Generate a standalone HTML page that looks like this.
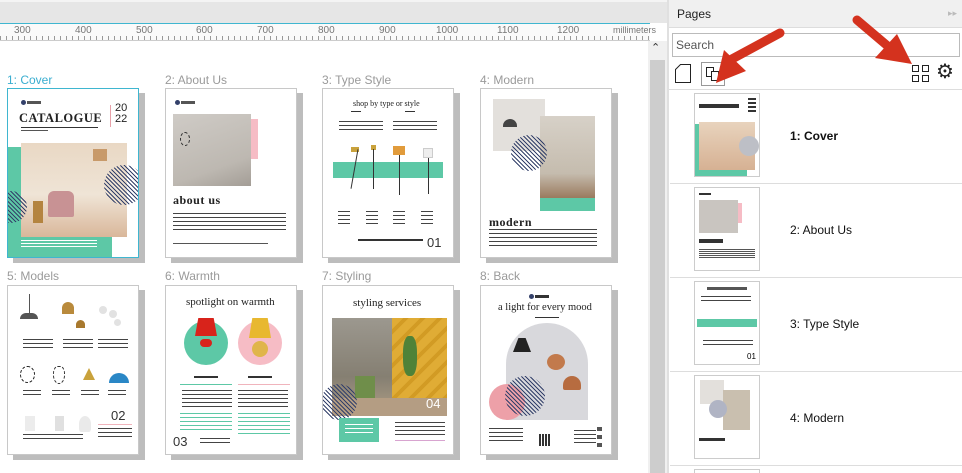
<!DOCTYPE html>
<html style="width:962px;height:473px;overflow:hidden"><head><meta charset="utf-8"><style>
*{margin:0;padding:0;box-sizing:border-box}
body{width:962px;height:473px;overflow:hidden;background:#fff;font-family:"Liberation Sans",sans-serif;position:relative}
.a{position:absolute}
.lbl{position:absolute;font-size:12px;color:#9a9a9a}
.sh{position:absolute;background:#bdbdbd;width:132px;height:170px}
.pg{position:absolute;background:#fff;width:132px;height:170px;border:1px solid #c8c8c8;overflow:hidden}
.ls{position:absolute;background:repeating-linear-gradient(#444 0 1px,transparent 1px 4px)}
.lg{position:absolute;background:repeating-linear-gradient(#5dc8a6 0 1px,transparent 1px 4px)}
.hc{position:absolute;border-radius:50%;background:repeating-linear-gradient(45deg,#33406a 0 1px,transparent 1px 3px)}
.ser{position:absolute;font-family:"Liberation Serif",serif;color:#222;white-space:nowrap}
.item{position:absolute;left:670px;width:292px;height:94px;border-bottom:1px solid #ddd;overflow:hidden}
.th{position:absolute;left:24px;top:3px;width:66px;height:84px;border:1px solid #ccc;background:#fff;overflow:hidden}
.it{position:absolute;left:120px;top:39px;font-size:12px;color:#111}
</style></head><body>
<div class="a" style="left:0;top:0;width:668px;height:23px;background:#e6e6e6;border-top:2px solid #f4f4f4"></div>
<div class="a" style="left:0;top:23px;width:650px;height:1px;background:#3fb6d0"></div>
<div class="a" style="left:0;top:24px;width:650px;height:17px;background:#fafafa;border-bottom:1px solid #ccc"></div>
<div class="a" style="left:0;top:36px;width:650px;height:4px;background:repeating-linear-gradient(90deg,#999 0 1px,transparent 1px 6px)"></div>
<div class="a" style="top:25px;left:0;font-size:10px;color:#777;width:660px;height:12px">
<span class="a" style="left:14px">300</span><span class="a" style="left:75px">400</span><span class="a" style="left:136px">500</span><span class="a" style="left:196px">600</span><span class="a" style="left:257px">700</span><span class="a" style="left:318px">800</span><span class="a" style="left:379px">900</span><span class="a" style="left:436px">1000</span><span class="a" style="left:497px">1100</span><span class="a" style="left:557px">1200</span><span class="a" style="left:613px;font-size:9px">millimeters</span></div>
<div class="a" style="left:648px;top:41px;width:19px;height:432px;background:#f0f0f0"></div>
<div class="a" style="left:651px;top:42px;font-size:11px;line-height:12px;color:#333">&#8963;</div>
<div class="a" style="left:650px;top:60px;width:15px;height:413px;background:#cdcdcd"></div>
<div class="a" style="left:667px;top:0;width:2px;height:473px;background:#e0e0e0"></div>

<div class="lbl" style="left:7px;top:73px;color:#3aaed0">1: Cover</div>
<div class="lbl" style="left:165px;top:73px">2: About Us</div>
<div class="lbl" style="left:322px;top:73px">3: Type Style</div>
<div class="lbl" style="left:480px;top:73px">4: Modern</div>
<div class="lbl" style="left:7px;top:269px">5: Models</div>
<div class="lbl" style="left:165px;top:269px">6: Warmth</div>
<div class="lbl" style="left:322px;top:269px">7: Styling</div>
<div class="lbl" style="left:480px;top:269px">8: Back</div>

<div class="sh" style="left:13px;top:93px"></div><div class="sh" style="left:171px;top:93px"></div><div class="sh" style="left:328px;top:93px"></div><div class="sh" style="left:486px;top:93px"></div>
<div class="sh" style="left:13px;top:290px"></div><div class="sh" style="left:171px;top:290px"></div><div class="sh" style="left:328px;top:290px"></div><div class="sh" style="left:486px;top:290px"></div>

<div class="pg" style="left:7px;top:88px;border-color:#3fb6d0">
<div class="a" style="left:13px;top:11px;width:5px;height:5px;border-radius:50%;background:#33406a"></div><div class="a" style="left:19px;top:12px;width:14px;height:3px;background:#555"></div>
<div class="ser" style="left:11px;top:22px;font-size:12.5px;font-weight:bold;letter-spacing:.5px">CATALOGUE</div>
<div class="a" style="left:102px;top:16px;width:1px;height:22px;background:#e7a0a8"></div>
<div class="a" style="left:107px;top:14px;font-size:11px;line-height:11px;color:#222">20<br>22</div>
<div class="a" style="left:13px;top:38px;width:77px;height:1px;background:#333"></div><div class="a" style="left:13px;top:41px;width:27px;height:1px;background:#555"></div>
<div class="a" style="left:0;top:58px;width:20px;height:112px;background:#5dc8a6"></div>
<div class="a" style="left:0;top:148px;width:104px;height:22px;background:#5dc8a6"></div>
<div class="a" style="left:13px;top:54px;width:106px;height:94px;background:linear-gradient(180deg,#e9d8c4 0%,#efe4d6 55%,#d9b79a 100%)"></div>
<div class="a" style="left:40px;top:102px;width:26px;height:26px;background:#c89294;border-radius:6px 6px 2px 2px"></div>
<div class="a" style="left:25px;top:112px;width:10px;height:22px;background:#b48440"></div>
<div class="a" style="left:85px;top:60px;width:14px;height:12px;background:#c89a6a"></div>
<div class="hc" style="left:96px;top:76px;width:40px;height:40px"></div>
<div class="hc" style="left:-13px;top:102px;width:32px;height:32px"></div>
<div class="ls" style="left:13px;top:151px;width:76px;height:9px;background:repeating-linear-gradient(#fff 0 1px,transparent 1px 3px)"></div>
</div>

<div class="pg" style="left:165px;top:88px">
<div class="a" style="left:9px;top:11px;width:5px;height:5px;border-radius:50%;background:#33406a"></div><div class="a" style="left:15px;top:12px;width:14px;height:3px;background:#555"></div>
<div class="a" style="left:83px;top:30px;width:9px;height:40px;background:#f6bcc5"></div>
<div class="a" style="left:7px;top:25px;width:78px;height:72px;background:linear-gradient(160deg,#cfcbc6,#bdb8b1 70%,#a39d96)"></div>
<div class="a" style="left:14px;top:43px;width:10px;height:14px;border:1px dashed #333;border-radius:50%"></div>
<div class="ser" style="left:7px;top:104px;font-size:12px;font-weight:bold;letter-spacing:.5px">about us</div>
<div class="ls" style="left:7px;top:124px;width:113px;height:20px"></div>
<div class="a" style="left:7px;top:154px;width:95px;height:1px;background:#555"></div>
</div>

<div class="pg" style="left:322px;top:88px">
<div class="ser" style="left:30px;top:10px;font-size:8px">shop by type or style</div>
<div class="a" style="left:28px;top:22px;width:10px;height:1px;background:#333"></div><div class="a" style="left:82px;top:22px;width:10px;height:1px;background:#333"></div>
<div class="ls" style="left:16px;top:32px;width:44px;height:12px"></div><div class="ls" style="left:70px;top:32px;width:44px;height:12px"></div>
<div class="a" style="left:10px;top:73px;width:110px;height:16px;background:#5dc8a6"></div>
<div class="a" style="left:28px;top:58px;width:8px;height:5px;background:#c9a23c"></div><div class="a" style="left:31px;top:60px;width:1px;height:40px;background:#333;transform:rotate(10deg)"></div>
<div class="a" style="left:48px;top:56px;width:5px;height:5px;background:#c9a23c"></div><div class="a" style="left:50px;top:60px;width:1px;height:40px;background:#333"></div>
<div class="a" style="left:70px;top:57px;width:12px;height:9px;background:#e19b3b"></div><div class="a" style="left:76px;top:66px;width:1px;height:40px;background:#333"></div>
<div class="a" style="left:100px;top:59px;width:10px;height:10px;background:#eee;border:1px solid #ccc"></div><div class="a" style="left:105px;top:69px;width:1px;height:36px;background:#333"></div>
<div class="ls" style="left:15px;top:122px;width:12px;height:13px"></div><div class="ls" style="left:43px;top:122px;width:12px;height:13px"></div><div class="ls" style="left:70px;top:122px;width:12px;height:13px"></div><div class="ls" style="left:98px;top:122px;width:12px;height:13px"></div>
<div class="a" style="left:35px;top:150px;width:65px;height:2px;background:#333"></div>
<div class="a" style="left:104px;top:146px;font-size:13px;color:#333">01</div>
</div>

<div class="pg" style="left:480px;top:88px">
<div class="a" style="left:12px;top:10px;width:52px;height:52px;background:#e3e0dc"></div>
<div class="a" style="left:22px;top:30px;width:14px;height:8px;background:#444;border-radius:7px 7px 0 0"></div>
<div class="a" style="left:59px;top:27px;width:55px;height:82px;background:linear-gradient(180deg,#d7d1c8,#c5bcae 70%,#9a7a5e)"></div>
<div class="hc" style="left:30px;top:46px;width:36px;height:36px"></div>
<div class="a" style="left:59px;top:109px;width:55px;height:13px;background:#5dc8a6"></div>
<div class="ser" style="left:8px;top:126px;font-size:12px;font-weight:bold;letter-spacing:.5px">modern</div>
<div class="ls" style="left:8px;top:140px;width:108px;height:18px"></div>
</div>

<div class="pg" style="left:7px;top:285px">
<div class="a" style="left:12px;top:27px;width:18px;height:6px;background:#555;border-radius:9px 9px 0 0"></div><div class="a" style="left:21px;top:8px;width:1px;height:20px;background:#555"></div>
<div class="a" style="left:54px;top:16px;width:12px;height:12px;background:#b98a3c;border-radius:6px 6px 0 0"></div>
<div class="a" style="left:68px;top:34px;width:9px;height:8px;background:#a8792e;border-radius:5px 5px 0 0"></div>
<div class="a" style="left:91px;top:20px;width:8px;height:8px;border-radius:50%;background:#e2e2e2"></div><div class="a" style="left:101px;top:24px;width:8px;height:8px;border-radius:50%;background:#e2e2e2"></div><div class="a" style="left:106px;top:33px;width:7px;height:7px;border-radius:50%;background:#e2e2e2"></div>
<div class="ls" style="left:15px;top:53px;width:30px;height:10px"></div><div class="ls" style="left:55px;top:53px;width:30px;height:10px"></div><div class="ls" style="left:90px;top:53px;width:30px;height:10px"></div>
<div class="a" style="left:12px;top:80px;width:15px;height:17px;border:1px dashed #222;border-radius:50%"></div>
<div class="a" style="left:45px;top:80px;width:12px;height:18px;border:1px dashed #333;border-radius:40% 40% 50% 50%"></div>
<div class="a" style="left:75px;top:82px;width:12px;height:12px;background:#c9a23c;clip-path:polygon(50% 0,100% 100%,0 100%)"></div>
<div class="a" style="left:101px;top:87px;width:20px;height:10px;background:#2a87c6;border-radius:10px 10px 0 0"></div>
<div class="ls" style="left:15px;top:104px;width:18px;height:6px"></div><div class="ls" style="left:44px;top:104px;width:18px;height:6px"></div><div class="ls" style="left:73px;top:104px;width:18px;height:6px"></div><div class="ls" style="left:100px;top:104px;width:18px;height:6px"></div>
<div class="a" style="left:17px;top:130px;width:10px;height:15px;background:#ececec"></div><div class="a" style="left:47px;top:130px;width:9px;height:15px;background:#e0e0e0"></div><div class="a" style="left:71px;top:130px;width:12px;height:16px;background:#eaeaea;border-radius:50% 50% 20% 20%"></div>
<div class="a" style="left:103px;top:122px;font-size:13px;color:#333">02</div>
<div class="a" style="left:90px;top:138px;width:34px;height:1px;background:#f0b4bc"></div>
<div class="ls" style="left:90px;top:142px;width:34px;height:10px"></div>
<div class="ls" style="left:15px;top:148px;width:60px;height:6px"></div>
</div>

<div class="pg" style="left:165px;top:285px">
<div class="ser" style="left:20px;top:10px;font-size:11px">spotlight on warmth</div>
<div class="a" style="left:18px;top:35px;width:44px;height:44px;border-radius:50%;background:#5dc8a6"></div>
<div class="a" style="left:29px;top:32px;width:22px;height:18px;background:#d8231b;clip-path:polygon(15% 0,85% 0,100% 100%,0 100%)"></div>
<div class="a" style="left:34px;top:53px;width:12px;height:8px;background:#d8231b;border-radius:4px"></div>
<div class="a" style="left:72px;top:35px;width:44px;height:44px;border-radius:50%;background:#f6bcc5"></div>
<div class="a" style="left:83px;top:32px;width:22px;height:20px;background:#e8b830;clip-path:polygon(15% 0,85% 0,100% 100%,0 100%)"></div>
<div class="a" style="left:86px;top:55px;width:16px;height:16px;border-radius:50%;background:#e0b54a"></div>
<div class="a" style="left:28px;top:90px;width:24px;height:2px;background:#333"></div><div class="a" style="left:82px;top:90px;width:24px;height:2px;background:#333"></div>
<div class="lg" style="left:14px;top:98px;width:52px;height:2px"></div><div class="a" style="left:72px;top:98px;width:52px;height:1px;background:#f0b4bc"></div>
<div class="ls" style="left:16px;top:104px;width:50px;height:18px"></div><div class="ls" style="left:72px;top:104px;width:50px;height:18px"></div>
<div class="lg" style="left:14px;top:127px;width:52px;height:18px"></div><div class="lg" style="left:72px;top:127px;width:52px;height:22px"></div>
<div class="a" style="left:7px;top:148px;font-size:13px;color:#333">03</div>
<div class="ls" style="left:34px;top:152px;width:30px;height:8px"></div>
</div>

<div class="pg" style="left:322px;top:285px">
<div class="ser" style="left:30px;top:11px;font-size:11px">styling services</div>
<div class="a" style="left:9px;top:32px;width:60px;height:98px;background:linear-gradient(180deg,#9c988f,#857f72 60%,#b09f85)"></div>
<div class="a" style="left:69px;top:32px;width:55px;height:98px;background:repeating-linear-gradient(135deg,#e0ac35 0 8px,#d29b24 8px 12px)"></div>
<div class="a" style="left:32px;top:90px;width:20px;height:22px;background:#6f8e4a"></div>
<div class="a" style="left:80px;top:50px;width:14px;height:40px;background:#4f8238;border-radius:40%"></div>
<div class="a" style="left:9px;top:112px;width:115px;height:18px;background:#b49d83"></div>
<div class="a" style="left:103px;top:110px;font-size:13px;color:#fff">04</div>
<div class="hc" style="left:-2px;top:98px;width:36px;height:36px"></div>
<div class="a" style="left:16px;top:132px;width:40px;height:24px;background:#5dc8a6"></div>
<div class="ls" style="left:22px;top:138px;width:28px;height:10px;background:repeating-linear-gradient(#fff 0 1px,transparent 1px 4px)"></div>
<div class="ls" style="left:72px;top:136px;width:50px;height:14px"></div>
<div class="a" style="left:72px;top:154px;width:50px;height:1px;background:#d8a4d0"></div>
</div>

<div class="pg" style="left:480px;top:285px">
<div class="a" style="left:48px;top:8px;width:5px;height:5px;border-radius:50%;background:#33406a"></div><div class="a" style="left:54px;top:9px;width:14px;height:3px;background:#333"></div>
<div class="ser" style="left:17px;top:16px;font-size:10.5px">a light for every mood</div>
<div class="a" style="left:54px;top:31px;width:24px;height:1px;background:#333"></div>
<div class="a" style="left:25px;top:37px;width:82px;height:97px;background:#d8d8dc;border-radius:41px 41px 0 0"></div>
<div class="a" style="left:32px;top:52px;width:18px;height:14px;background:#222;clip-path:polygon(30% 0,70% 0,100% 100%,0 100%)"></div>
<div class="a" style="left:66px;top:68px;width:18px;height:16px;border-radius:50%;background:#c27a4c"></div>
<div class="a" style="left:82px;top:90px;width:18px;height:14px;border-radius:9px 9px 2px 2px;background:#b76c40"></div>
<div class="a" style="left:8px;top:98px;width:36px;height:36px;border-radius:50%;background:#eda0a8"></div>
<div class="hc" style="left:24px;top:90px;width:40px;height:40px"></div>
<div class="ls" style="left:8px;top:142px;width:34px;height:16px"></div>
<div class="a" style="left:58px;top:148px;width:12px;height:12px;background:repeating-linear-gradient(90deg,#333 0 2px,#fff 2px 3px)"></div>
<div class="ls" style="left:93px;top:144px;width:22px;height:14px"></div>
<div class="a" style="left:116px;top:141px;width:5px;height:20px;background:repeating-linear-gradient(#555 0 4px,transparent 4px 8px)"></div>
</div>

<div class="a" style="left:669px;top:0;width:293px;height:473px;background:#fff"></div>
<div class="a" style="left:669px;top:0;width:293px;height:28px;background:#f0f0f0;border-bottom:1px solid #ddd"></div>
<div class="a" style="left:677px;top:7px;font-size:12px;color:#222">Pages</div>
<div class="a" style="left:948px;top:8px;font-size:9px;color:#bbb">&#9656;&#9656;</div>
<div class="a" style="left:672px;top:33px;width:288px;height:24px;border:1px solid #bbb;background:#fff"></div>
<div class="a" style="left:676px;top:38px;font-size:12px;color:#555">Search</div>
<svg class="a" style="left:675px;top:64px" width="16" height="19"><path d="M5.5 0.5H15.5V18.5H0.5V5.5Z" fill="none" stroke="#222"/></svg>
<div class="a" style="left:701px;top:62px;width:24px;height:24px;border:1px solid #999;background:#fff"></div>
<div class="a" style="left:706px;top:67px;width:8px;height:10px;border:1px solid #222"></div>
<div class="a" style="left:711px;top:71px;width:8px;height:10px;border:1px solid #222;background:#fff"></div>
<div class="a" style="left:912px;top:65px;width:7px;height:7px;border:1px solid #222"></div><div class="a" style="left:922px;top:65px;width:7px;height:7px;border:1px solid #222"></div>
<div class="a" style="left:912px;top:75px;width:7px;height:7px;border:1px solid #222"></div><div class="a" style="left:922px;top:75px;width:7px;height:7px;border:1px solid #222"></div>
<div class="a" style="left:936px;top:60px;font-size:20px;line-height:24px;color:#222">&#9881;</div>
<div class="a" style="left:669px;top:89px;width:293px;height:1px;background:#ddd"></div>
<svg class="a" style="left:700px;top:25px" width="90" height="70"><path d="M80 8 L32 34" stroke="#d4321e" stroke-width="9" stroke-linecap="round"/><path d="M16 58 L24 25 L46 46 Z" fill="#d4321e"/></svg>
<svg class="a" style="left:845px;top:10px" width="80" height="60"><path d="M12 10 L45 38" stroke="#d4321e" stroke-width="9" stroke-linecap="round"/><path d="M67 54 L30 48 L52 24 Z" fill="#d4321e"/></svg>

<div class="item" style="top:90px">
<div class="th">
<div class="a" style="left:4px;top:10px;width:40px;height:4px;background:#333"></div>
<div class="a" style="left:53px;top:4px;width:8px;height:16px;background:repeating-linear-gradient(#333 0 2px,transparent 2px 4px)"></div>
<div class="a" style="left:0;top:30px;width:5px;height:54px;background:#5dc8a6"></div>
<div class="a" style="left:4px;top:28px;width:56px;height:48px;background:linear-gradient(180deg,#e8d3bd,#d6b193)"></div>
<div class="a" style="left:44px;top:42px;width:20px;height:20px;border-radius:50%;background:#bdbfc6"></div>
<div class="a" style="left:0;top:76px;width:52px;height:8px;background:#5dc8a6"></div>
</div><div class="it" style="font-weight:bold">1: Cover</div></div>
<div class="item" style="top:184px">
<div class="th">
<div class="a" style="left:4px;top:5px;width:12px;height:2px;background:#333"></div>
<div class="a" style="left:4px;top:12px;width:39px;height:33px;background:#c9c5c0"></div>
<div class="a" style="left:43px;top:15px;width:4px;height:20px;background:#f6bcc5"></div>
<div class="a" style="left:4px;top:51px;width:24px;height:4px;background:#333"></div>
<div class="ls" style="left:4px;top:61px;width:56px;height:9px;background:repeating-linear-gradient(#555 0 1px,transparent 1px 2px)"></div>
</div><div class="it">2: About Us</div></div>
<div class="item" style="top:278px">
<div class="th">
<div class="a" style="left:12px;top:5px;width:40px;height:3px;background:#555"></div>
<div class="ls" style="left:6px;top:14px;width:50px;height:8px"></div>
<div class="a" style="left:2px;top:37px;width:60px;height:8px;background:#5dc8a6"></div>
<div class="ls" style="left:8px;top:58px;width:50px;height:8px"></div>
<div class="a" style="left:52px;top:70px;font-size:8px;line-height:9px">01</div>
</div><div class="it">3: Type Style</div></div>
<div class="item" style="top:372px">
<div class="th">
<div class="a" style="left:5px;top:4px;width:24px;height:24px;background:#e3e0dc"></div>
<div class="a" style="left:28px;top:14px;width:27px;height:40px;background:#c9bfaf"></div>
<div class="a" style="left:14px;top:24px;width:18px;height:18px;border-radius:50%;background:#b0b4c4"></div>
<div class="a" style="left:4px;top:62px;width:26px;height:3px;background:#333"></div>
</div><div class="it">4: Modern</div></div>
<div class="a" style="left:694px;top:469px;width:66px;height:4px;border:1px solid #ccc;border-bottom:none"></div>
</body></html>
